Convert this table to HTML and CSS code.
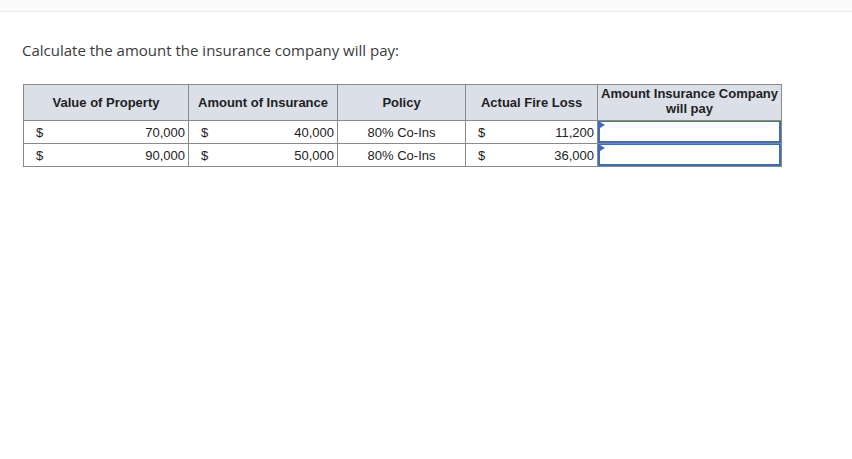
FILE: index.html
```html
<!DOCTYPE html>
<html>
<head>
<meta charset="utf-8">
<link rel="stylesheet" href="styles.css">
</head>
<body>
<div class="topbar"></div>
<div class="content">
  <p class="prompt">Calculate the amount the insurance company will pay:</p>
  <table class="grid">
    <colgroup>
      <col class="c1"><col class="c2"><col class="c3"><col class="c4"><col class="c5"><col class="c6"><col class="c7"><col class="c8">
    </colgroup>
    <thead>
      <tr>
        <th colspan="2">Value of Property</th>
        <th colspan="2">Amount of Insurance</th>
        <th>Policy</th>
        <th colspan="2">Actual Fire Loss</th>
        <th class="last">Amount Insurance Company<br>will pay</th>
      </tr>
    </thead>
    <tbody>
      <tr>
        <td class="cur">$</td><td class="num">70,000</td>
        <td class="cur">$</td><td class="num">40,000</td>
        <td class="ctr">80% Co-Ins</td>
        <td class="cur">$</td><td class="num">11,200</td>
        <td class="inp"><div class="box"><span class="flag"></span></div></td>
      </tr>
      <tr>
        <td class="cur">$</td><td class="num">90,000</td>
        <td class="cur">$</td><td class="num">50,000</td>
        <td class="ctr">80% Co-Ins</td>
        <td class="cur">$</td><td class="num">36,000</td>
        <td class="inp"><div class="box"><span class="flag"></span></div></td>
      </tr>
    </tbody>
  </table>
</div>
</body>
</html>
```
FILE: styles.css
```css
html, body { margin: 0; padding: 0; background: #fff; }
body { font-family: "Open Sans", "Liberation Sans", sans-serif; }
.topbar { height: 11px; background: #fafafa; border-bottom: 1px solid #ececec; }
.content { padding: 28px 0 0 23px; }
.prompt {
  margin: 0 0 0 -1px;
  font-size: 15px;
  line-height: 20px;
  color: #3a3a3a;
}
.grid {
  margin-top: 24px;
  border-collapse: collapse;
  table-layout: fixed;
  width: 759px;
  font-family: "Liberation Sans", Arial, sans-serif;
  font-size: 13px;
  color: #222;
}
.c1 { width: 20px; } .c2 { width: 145px; }
.c3 { width: 20px; } .c4 { width: 129px; }
.c5 { width: 128px; }
.c6 { width: 20px; } .c7 { width: 112px; }
.c8 { width: 184px; }
.grid th {
  background: #dadfe8;
  border: 1px solid #8a8a8a;
  font-weight: bold;
  height: 34px;
  padding: 0 4px;
  line-height: 15px;
  color: #222;
  white-space: nowrap;
}
.grid th.last { vertical-align: top; padding: 1px 0 0; }
.grid td {
  border-top: 1px solid #8a8a8a;
  border-bottom: 1px solid #8a8a8a;
  height: 21px;
  padding: 0 3px;
  line-height: 15px;
}
.grid td.cur { border-left: 1px solid #8a8a8a; padding-left: 12px; }
.grid td.num { text-align: right; border-right: 1px solid #8a8a8a; }
.grid td.ctr { text-align: center; border-right: 1px solid #8a8a8a; }
.grid td.inp { padding: 0; border-right: 1px solid #8a8a8a; }
.box {
  position: relative;
  height: 19px;
  border: 2px solid #3d6db5;
  border-width: 1px 2px 2px 2px;
  background: #fff;
}
.flag {
  position: absolute;
  left: 0;
  top: 0;
  width: 0;
  height: 0;
  border-top: 3px solid transparent;
  border-bottom: 3px solid transparent;
  border-left: 5px solid #3d6db5;
}
```
